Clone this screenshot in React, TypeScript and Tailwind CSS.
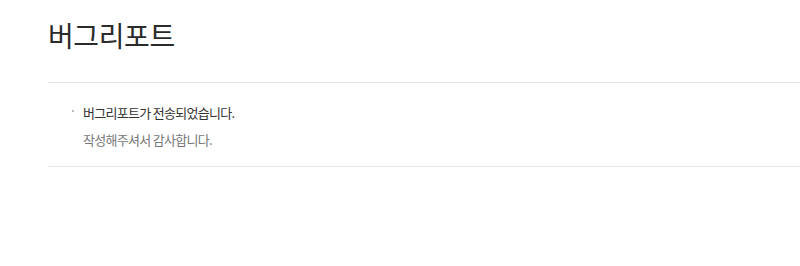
import React from "react";

export default function App() {
  return (
    <div className="w-[800px] h-[266px] bg-white" style={{ fontFamily: '"Noto Sans CJK KR", "Noto Sans", sans-serif' }}>
      <div className="pl-[48px]">
        <h1 className="pt-[17px] pb-[29px] text-[28px] leading-[36px] text-[#2b2b2b] tracking-[-0.4px] font-normal">버그리포트</h1>
        <div className="border-t border-[#e5e5e5]">
          <div className="pl-[24px] pt-[20px] pb-[17px]">
            <div className="flex items-center text-[13px] text-[#333] leading-[19px] tracking-[-0.7px]">
              <span className="w-[2px] h-[2px] bg-[#bbb] mr-[9px] -mt-[4px]"></span>
              <span>버그리포트가 전송되었습니다.</span>
            </div>
            <p className="mt-[8px] pl-[11px] text-[13px] text-[#777] leading-[19px] tracking-[-0.7px]">작성해주셔서 감사합니다.</p>
          </div>
        </div>
        <div className="border-t border-[#e5e5e5]"></div>
      </div>
    </div>
  );
}
